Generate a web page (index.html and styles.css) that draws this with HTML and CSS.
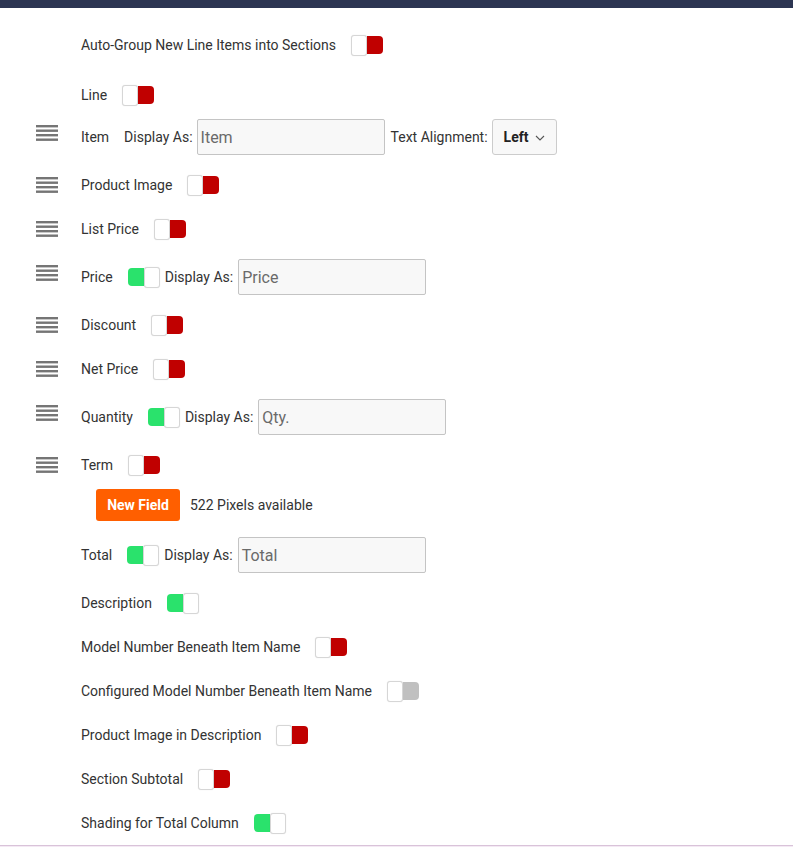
FILE: index.html
```html
<!DOCTYPE html>
<html>
<head>
<meta charset="utf-8">
<link rel="stylesheet" href="styles.css">
</head>
<body>
<div class="topbar"></div>
<main class="list">
  <div class="row mt-19">
    <span class="slot"></span>
    <span class="label">Auto-Group New Line Items into Sections</span>
    <span class="toggle off"><span class="knob"></span><span class="fill"></span></span>
  </div>
  <div class="row mt-14">
    <span class="slot"></span>
    <span class="label">Line</span>
    <span class="toggle off"><span class="knob"></span><span class="fill"></span></span>
  </div>
  <div class="row tall mt-2">
    <span class="slot"><svg class="handle up" width="22" height="16" viewBox="0 0 22 16"><rect y="0" width="22" height="2.4"/><rect y="4.5" width="22" height="2.4"/><rect y="9" width="22" height="2.4"/><rect y="13.5" width="22" height="2.4"/></svg></span>
    <span class="label">Item</span>
    <span class="da tight">Display As:</span>
    <span class="input">Item</span>
    <span class="ta">Text Alignment:</span>
    <span class="select"><b>Left</b><svg class="chev" width="10" height="6" viewBox="0 0 10 6"><path d="M1 1 L5 5 L9 1" fill="none" stroke="#555" stroke-width="1.1"/></svg></span>
  </div>
  <div class="row">
    <span class="slot"><svg class="handle" width="22" height="16" viewBox="0 0 22 16"><rect y="0" width="22" height="2.4"/><rect y="4.5" width="22" height="2.4"/><rect y="9" width="22" height="2.4"/><rect y="13.5" width="22" height="2.4"/></svg></span>
    <span class="label">Product Image</span>
    <span class="toggle off"><span class="knob"></span><span class="fill"></span></span>
  </div>
  <div class="row">
    <span class="slot"><svg class="handle" width="22" height="16" viewBox="0 0 22 16"><rect y="0" width="22" height="2.4"/><rect y="4.5" width="22" height="2.4"/><rect y="9" width="22" height="2.4"/><rect y="13.5" width="22" height="2.4"/></svg></span>
    <span class="label">List Price</span>
    <span class="toggle off"><span class="knob"></span><span class="fill"></span></span>
  </div>
  <div class="row tall">
    <span class="slot"><svg class="handle up" width="22" height="16" viewBox="0 0 22 16"><rect y="0" width="22" height="2.4"/><rect y="4.5" width="22" height="2.4"/><rect y="9" width="22" height="2.4"/><rect y="13.5" width="22" height="2.4"/></svg></span>
    <span class="label">Price</span>
    <span class="toggle on"><span class="fill"></span><span class="knob"></span></span>
    <span class="da">Display As:</span>
    <span class="input">Price</span>
  </div>
  <div class="row">
    <span class="slot"><svg class="handle" width="22" height="16" viewBox="0 0 22 16"><rect y="0" width="22" height="2.4"/><rect y="4.5" width="22" height="2.4"/><rect y="9" width="22" height="2.4"/><rect y="13.5" width="22" height="2.4"/></svg></span>
    <span class="label">Discount</span>
    <span class="toggle off"><span class="knob"></span><span class="fill"></span></span>
  </div>
  <div class="row">
    <span class="slot"><svg class="handle" width="22" height="16" viewBox="0 0 22 16"><rect y="0" width="22" height="2.4"/><rect y="4.5" width="22" height="2.4"/><rect y="9" width="22" height="2.4"/><rect y="13.5" width="22" height="2.4"/></svg></span>
    <span class="label">Net Price</span>
    <span class="toggle off"><span class="knob"></span><span class="fill"></span></span>
  </div>
  <div class="row tall">
    <span class="slot"><svg class="handle up" width="22" height="16" viewBox="0 0 22 16"><rect y="0" width="22" height="2.4"/><rect y="4.5" width="22" height="2.4"/><rect y="9" width="22" height="2.4"/><rect y="13.5" width="22" height="2.4"/></svg></span>
    <span class="label">Quantity</span>
    <span class="toggle on"><span class="fill"></span><span class="knob"></span></span>
    <span class="da">Display As:</span>
    <span class="input">Qty.</span>
  </div>
  <div class="row">
    <span class="slot"><svg class="handle" width="22" height="16" viewBox="0 0 22 16"><rect y="0" width="22" height="2.4"/><rect y="4.5" width="22" height="2.4"/><rect y="9" width="22" height="2.4"/><rect y="13.5" width="22" height="2.4"/></svg></span>
    <span class="label">Term</span>
    <span class="toggle off"><span class="knob"></span><span class="fill"></span></span>
  </div>
  <div class="row mt-4 newfield">
    <span class="slot"></span>
    <button class="btn">New Field</button>
    <span class="avail">522 Pixels available</span>
  </div>
  <div class="row tall mt-10">
    <span class="slot"></span>
    <span class="label">Total</span>
    <span class="toggle on"><span class="fill"></span><span class="knob"></span></span>
    <span class="da">Display As:</span>
    <span class="input">Total</span>
  </div>
  <div class="row">
    <span class="slot"></span>
    <span class="label">Description</span>
    <span class="toggle on"><span class="fill"></span><span class="knob"></span></span>
  </div>
  <div class="row">
    <span class="slot"></span>
    <span class="label">Model Number Beneath Item Name</span>
    <span class="toggle off"><span class="knob"></span><span class="fill"></span></span>
  </div>
  <div class="row">
    <span class="slot"></span>
    <span class="label">Configured Model Number Beneath Item Name</span>
    <span class="toggle disabled"><span class="knob"></span><span class="fill"></span></span>
  </div>
  <div class="row">
    <span class="slot"></span>
    <span class="label">Product Image in Description</span>
    <span class="toggle off"><span class="knob"></span><span class="fill"></span></span>
  </div>
  <div class="row">
    <span class="slot"></span>
    <span class="label">Section Subtotal</span>
    <span class="toggle off"><span class="knob"></span><span class="fill"></span></span>
  </div>
  <div class="row">
    <span class="slot"></span>
    <span class="label">Shading for Total Column</span>
    <span class="toggle on"><span class="fill"></span><span class="knob"></span></span>
  </div>
</main>
<div class="footer"></div>
</body>
</html>
```

FILE: styles.css
```css
html, body {
  margin: 0;
  padding: 0;
  background: #ffffff;
}
body {
  font-family: Roboto, "Liberation Sans", Arial, sans-serif;
  font-size: 14px;
  color: #333333;
}
.topbar {
  height: 8px;
  background: #2c3552;
}
.list {
  display: flex;
  flex-direction: column;
  padding-left: 36px;
  height: 837px;
  box-sizing: border-box;
}
.row {
  display: flex;
  align-items: center;
  height: 36px;
  margin-top: 8px;
  flex-shrink: 0;
}
.row.tall {
  height: 44px;
}
.mt-19 { margin-top: 19px; }
.mt-14 { margin-top: 14px; }
.mt-2 { margin-top: 2px; }
.mt-4 { margin-top: 4px; }
.mt-10 { margin-top: 10px; }
.slot {
  width: 45px;
  flex-shrink: 0;
  display: flex;
  align-items: center;
}
.handle {
  display: block;
  fill: #757575;
}
.handle.up {
  margin-top: -8px;
}
.label {
  margin-right: 15px;
  white-space: nowrap;
}
.toggle {
  display: inline-flex;
  align-items: center;
  width: 32px;
  height: 21px;
  flex-shrink: 0;
}
.toggle .knob {
  width: 16px;
  height: 21px;
  box-sizing: border-box;
  background: #ffffff;
  border: 1px solid #d6d6d6;
  border-radius: 3px;
  box-shadow: 0 0 1px rgba(0,0,0,0.15);
}
.toggle .fill {
  width: 16px;
  height: 18px;
}
.toggle.off .fill {
  background: #c00000;
  border-radius: 0 4px 4px 0;
}
.toggle.disabled .fill {
  background: #c0c0c0;
  border-radius: 0 4px 4px 0;
}
.toggle.on .fill {
  background: #2ae26c;
  border-radius: 4px 0 0 4px;
}
.toggle.on {
  margin-right: 5px;
}
.da {
  margin-right: 5px;
  white-space: nowrap;
}
.da.tight {
  margin-right: 4px;
}
.input {
  width: 188px;
  height: 36px;
  box-sizing: border-box;
  border: 1px solid #c4c4c4;
  border-radius: 2px;
  background: #f8f8f8;
  color: #6a6a6a;
  font-size: 16px;
  padding-left: 3px;
  display: flex;
  align-items: center;
}
.ta {
  margin-left: 6px;
  margin-right: 4px;
  white-space: nowrap;
}
.select {
  width: 65px;
  height: 36px;
  box-sizing: border-box;
  border: 1px solid #cccccc;
  border-radius: 3px;
  background: #f8f8f8;
  display: flex;
  align-items: center;
  padding-left: 11px;
  color: #222222;
}
.select b {
  font-weight: 700;
}
.chev {
  margin-left: 7px;
  margin-top: 1px;
}
.newfield .slot {
  width: 60px;
}
.btn {
  width: 84px;
  height: 32px;
  border: none;
  border-radius: 3px;
  background: #ff5f00;
  color: #ffffff;
  font-family: Roboto, "Liberation Sans", Arial, sans-serif;
  font-size: 14px;
  font-weight: 700;
  padding: 0;
  margin-right: 10px;
}
.avail {
  white-space: nowrap;
}
.footer {
  height: 2px;
  border-top: 1px solid #d9c3d9;
  background: #f4e9f4;
  box-sizing: border-box;
}
```
